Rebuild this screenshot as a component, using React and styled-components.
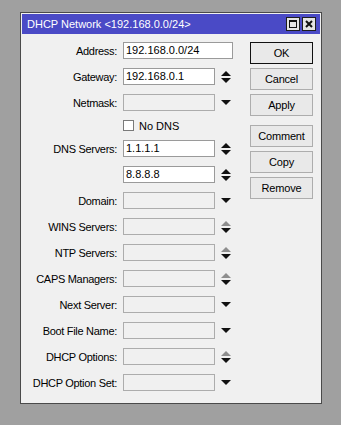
import styled, { createGlobalStyle } from "styled-components";

const Global = createGlobalStyle`
	html, body {
		margin: 0;
		padding: 0;
		background: #a0a0a0;
	}
	body {
		font-family: "Liberation Sans", Arial, sans-serif;
		font-size: 11px;
	}
`;

const Page = styled.div`
	width: 341px;
	height: 425px;
	padding: 12px 0 0 20px;
	box-sizing: border-box;
`;

const Window = styled.div`
	width: 302px;
	height: 392px;
	box-sizing: border-box;
	border: 1px solid #4a4a4a;
	background: #f0f0f0;
	display: flex;
	flex-direction: column;
`;

const TitleBar = styled.div`
	height: 20px;
	margin: 1px 1px 0;
	background: #4a4ac6;
	color: #fff;
	display: flex;
	align-items: center;
	padding: 0 4px 0 5px;
	.title {
		flex-grow: 1;
		font-size: 11px;
	}
`;

const TitleButton = styled.div`
	width: 12px;
	height: 12px;
	margin-left: 2px;
	border: 1px solid #1e1e1e;
	background: #e4e4e4;
	display: flex;
	align-items: center;
	justify-content: center;
`;

const Body = styled.div`
	display: flex;
	padding-top: 8px;
	gap: 17px;
`;

const Form = styled.div`
	display: flex;
	flex-direction: column;
	gap: 9px;
`;

const Row = styled.div`
	display: flex;
	align-items: center;
	height: ${(p) => (p.$small ? "11px" : "17px")};
`;

const Label = styled.div`
	width: 96px;
	margin-right: 6px;
	text-align: right;
	color: #000;
	letter-spacing: -0.3px;
	white-space: nowrap;
`;

const Field = styled.div`
	width: ${(p) => (p.$wide ? "110px" : "92px")};
	height: 17px;
	box-sizing: border-box;
	border: 1px solid ${(p) => (p.$disabled ? "#acacac" : "#9a9a9a")};
	background: ${(p) => (p.$disabled ? "#f0f0f0" : "#fff")};
	padding: 0 2px;
	line-height: 15px;
	color: #000;
	white-space: nowrap;
	overflow: hidden;
`;

const ArrowBox = styled.div`
	width: 10px;
	margin-left: 6px;
	display: flex;
	align-items: center;
`;

const Check = styled.div`
	width: 11px;
	height: 11px;
	box-sizing: border-box;
	border: 1px solid #7a7a7a;
	background: #fff;
	margin-left: 102px;
	margin-right: 5px;
`;

const Buttons = styled.div`
	display: flex;
	flex-direction: column;
	gap: 4px;
	.spacer {
		height: 1px;
	}
`;

const Button = styled.div`
	width: 63px;
	height: 22px;
	box-sizing: border-box;
	border: 1px solid ${(p) => (p.$default ? "#111" : "#adadad")};
	background: #e9e9e9;
	display: flex;
	align-items: center;
	justify-content: center;
	color: #000;
	letter-spacing: -0.2px;
`;

function Arrow({ kind }) {
	if (!kind) return <ArrowBox />;
	if (kind === "down")
		return (
			<ArrowBox>
				<svg width="10" height="12" viewBox="0 0 10 12">
					<polygon points="0,3 10,3 5,8" fill="#111" />
				</svg>
			</ArrowBox>
		);
	const up = kind === "gray" ? "#8e8e8e" : "#111";
	return (
		<ArrowBox>
			<svg width="10" height="12" viewBox="0 0 10 12">
				<polygon points="5,0 10,5 0,5" fill={up} />
				<polygon points="0,7 10,7 5,12" fill="#111" />
			</svg>
		</ArrowBox>
	);
}

const rows = [
	{ label: "Address", value: "192.168.0.0/24", wide: true },
	{ label: "Gateway", value: "192.168.0.1", arrow: "updown" },
	{ label: "Netmask", disabled: true, arrow: "down" },
	{ check: "No DNS" },
	{ label: "DNS Servers", value: "1.1.1.1", arrow: "updown" },
	{ label: "", value: "8.8.8.8", arrow: "updown" },
	{ label: "Domain", disabled: true, arrow: "down" },
	{ label: "WINS Servers", disabled: true, arrow: "gray" },
	{ label: "NTP Servers", disabled: true, arrow: "gray" },
	{ label: "CAPS Managers", disabled: true, arrow: "gray" },
	{ label: "Next Server", disabled: true, arrow: "down" },
	{ label: "Boot File Name", disabled: true, arrow: "down" },
	{ label: "DHCP Options", disabled: true, arrow: "gray" },
	{ label: "DHCP Option Set", disabled: true, arrow: "down" },
];

export default function App() {
	return (
		<>
			<Global />
			<Page>
				<Window>
					<TitleBar>
						<span className="title">DHCP Network &lt;192.168.0.0/24&gt;</span>
						<TitleButton>
							<svg width="8" height="8" viewBox="0 0 8 8">
								<rect x="0.5" y="0.5" width="7" height="7" fill="none" stroke="#111" />
								<rect x="0" y="0" width="8" height="2" fill="#111" />
							</svg>
						</TitleButton>
						<TitleButton>
							<svg width="8" height="8" viewBox="0 0 8 8">
								<path d="M1 1 L7 7 M7 1 L1 7" stroke="#111" strokeWidth="2" />
							</svg>
						</TitleButton>
					</TitleBar>
					<Body>
						<Form>
							{rows.map((r, i) =>
								r.check ? (
									<Row key={i} $small>
										<Check />
										<span>{r.check}</span>
									</Row>
								) : (
									<Row key={i}>
										<Label>{r.label ? r.label + ":" : ""}</Label>
										<Field $wide={r.wide} $disabled={r.disabled}>
											{r.value}
										</Field>
										{!r.wide && <Arrow kind={r.arrow} />}
									</Row>
								)
							)}
						</Form>
						<Buttons>
							<Button $default>OK</Button>
							<Button>Cancel</Button>
							<Button>Apply</Button>
							<div className="spacer" />
							<Button>Comment</Button>
							<Button>Copy</Button>
							<Button>Remove</Button>
						</Buttons>
					</Body>
				</Window>
			</Page>
		</>
	);
}
